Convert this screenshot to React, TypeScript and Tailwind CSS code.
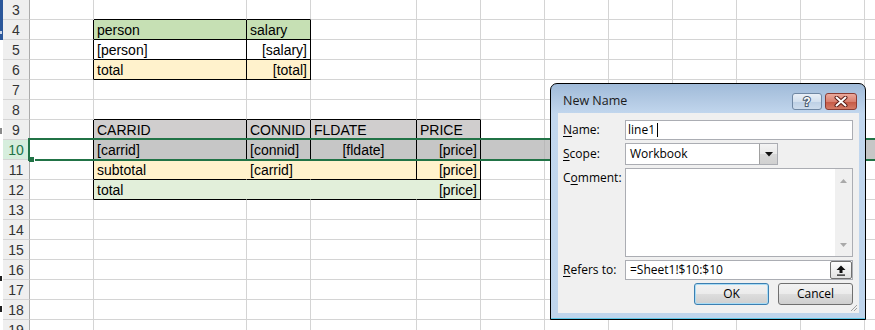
import React from 'react';

const WCLS = ['w-[64px]', 'w-[153px]', 'w-[64px]', 'w-[106px]', 'w-[64px]', 'w-[64px]', 'w-[64px]', 'w-[64px]', 'w-[64px]', 'w-[64px]', 'w-[64px]', 'w-[64px]'];

type Cell = { t: string; a?: 'l' | 'r' | 'c' };
const CONTENT: Record<number, Record<number, Cell>> = {
  4: { 1: { t: 'person' }, 2: { t: 'salary' } },
  5: { 1: { t: '[person]' }, 2: { t: '[salary]', a: 'r' } },
  6: { 1: { t: 'total' }, 2: { t: '[total]', a: 'r' } },
  9: { 1: { t: 'CARRID' }, 2: { t: 'CONNID' }, 3: { t: 'FLDATE' }, 4: { t: 'PRICE' } },
  10: { 1: { t: '[carrid]' }, 2: { t: '[connid]' }, 3: { t: '[fldate]', a: 'c' }, 4: { t: '[price]', a: 'r' } },
  11: { 1: { t: 'subtotal' }, 2: { t: '[carrid]' }, 4: { t: '[price]', a: 'r' } },
  12: { 1: { t: 'total' }, 4: { t: '[price]', a: 'r' } },
};

type Fill = 'green' | 'yellow' | 'gray' | 'sel' | 'lgreen' | null;
function fillOf(r: number, c: number): Fill {
  if (r === 4 && (c === 1 || c === 2)) return 'green';
  if (r === 6 && (c === 1 || c === 2)) return 'yellow';
  if (r === 9 && c >= 1 && c <= 4) return 'gray';
  if (r === 10 && c >= 1) return 'sel';
  if (r === 11 && c >= 1 && c <= 4) return 'yellow';
  if (r === 12 && c >= 1 && c <= 4) return 'lgreen';
  return null;
}
const BG: Record<string, string> = {
  green: 'bg-[#c6e0b4]',
  yellow: 'bg-[#fff2cc]',
  gray: 'bg-[#d0cece]',
  sel: 'bg-[#c6c6c6]',
  lgreen: 'bg-[#e2efda]',
};
const BR_FILL: Record<string, string> = {
  green: 'border-r-[#c6e0b4]',
  yellow: 'border-r-[#fff2cc]',
  gray: 'border-r-[#d0cece]',
  sel: 'border-r-[#b9b9b9]',
  lgreen: 'border-r-[#e2efda]',
};

function blackRight(r: number, c: number) {
  if (r >= 4 && r <= 6) return c <= 2;
  if (r === 9 || r === 10) return c <= 4;
  if (r === 11) return c === 0 || c === 3 || c === 4;
  if (r === 12) return c === 0 || c === 4;
  return false;
}
function blackBottom(r: number, c: number) {
  if (r >= 3 && r <= 6) return c === 1 || c === 2;
  if (r >= 8 && r <= 12) return c >= 1 && c <= 4;
  return false;
}

function cellClass(r: number, c: number) {
  const f = fillOf(r, c);
  const fr = fillOf(r, c + 1);
  let br = 'border-r-[#d4d4d4]';
  if (blackRight(r, c)) br = 'border-r-black';
  else if (f === 'sel') br = 'border-r-[#b9b9b9]';
  else if (f && f === fr) br = BR_FILL[f];
  const bb = blackBottom(r, c) ? 'border-b-black' : 'border-b-[#d4d4d4]';
  const bg = f ? BG[f] : 'bg-white';
  const cell = CONTENT[r]?.[c];
  const al = cell?.a === 'r' ? 'text-right' : cell?.a === 'c' ? 'text-center' : 'text-left';
  return [WCLS[c], 'shrink-0 h-[20px] border-r border-b px-[3px] pt-[1px] leading-[18px] whitespace-nowrap overflow-hidden', br, bb, bg, al].join(' ');
}

const ROWS = Array.from({ length: 17 }, (_, i) => i + 3);

function Sheet() {
  return (
    <div className="flex font-['Liberation_Sans',Arial,sans-serif] text-[14px] text-black">
      {/* sliver of a window behind */}
      <div className="w-[3px] shrink-0 flex flex-col">
        <div className="h-[31px] bg-[#2b579a]" />
        <div className="h-[3px] flex">
          <div className="w-[2px] bg-[#c9d5ea]" />
          <div className="w-[1px] bg-[#2b579a]" />
        </div>
        <div className="h-[6px] bg-[#2b579a]" />
        <div className="h-[88px] bg-white" />
        <div className="h-[6px] w-[2px] bg-[#8a8a8a]" />
        <div className="h-[142px] bg-white" />
        <div className="h-[5px] w-[2px] bg-[#202020]" />
        <div className="h-[25px] bg-white" />
        <div className="h-[6px] w-[2px] bg-[#202020]" />
        <div className="h-[30px] bg-white" />
      </div>
      <div className="flex flex-col">
        {ROWS.map((r) => (
          <div key={r} className="flex h-[20px]">
            <div
              className={
                r === 10
                  ? 'w-[27px] shrink-0 h-[20px] border-r border-b border-r-[#ababab] border-b-[#d4d4d4] bg-[#d6eedd] text-[#217346] text-center text-[14px] pt-[1px] leading-[18px]'
                  : 'w-[27px] shrink-0 h-[20px] border-r border-b border-r-[#ababab] border-b-[#d4d4d4] bg-[#efefef] text-[#333] text-center text-[14px] pt-[1px] leading-[18px]'
              }
            >
              {r}
            </div>
            {WCLS.map((_, c) => (
              <div key={c} className={cellClass(r, c)}>
                {CONTENT[r]?.[c]?.t ?? ''}
              </div>
            ))}
          </div>
        ))}
      </div>
    </div>
  );
}

function Label({ pre, u, post }: { pre?: string; u: string; post: string }) {
  return (
    <span>
      {pre}
      <span className="underline underline-offset-[2px]">{u}</span>
      {post}
    </span>
  );
}

function Dialog() {
  return (
    <div className="absolute left-[550px] top-[83px] w-[316px] h-[237px] rounded-t-[7px] border border-black bg-[linear-gradient(to_bottom,#a0bbd9_0px,#b7cde6_20px,#c2d7ee_30px,#bfd5ec_100%)] shadow-[inset_0_-1px_0_#5cc6e6] flex flex-col font-['Open_Sans',Arial,sans-serif] text-[12px] text-black">
      {/* title bar */}
      <div className="h-[29px] flex items-start pl-[12px] pr-[8px]">
        <span className="pt-[9px] text-[12.5px] leading-[16px] text-[#1b1b1b]">New Name</span>
        <div className="ml-auto pt-[9px] flex gap-[3px]">
          <div className="w-[30px] h-[17px] rounded-[3px] border border-[#6f87a3] bg-[linear-gradient(to_bottom,#e9eff7_0%,#d3e0ee_50%,#bccfe4_51%,#cddcec_100%)] flex items-center justify-center">
            <svg width="12" height="13" viewBox="0 0 12 13">
              <text x="6" y="11" textAnchor="middle" fontFamily="Liberation Sans, Arial, sans-serif" fontWeight="bold" fontSize="12" fill="#ffffff" stroke="#4a5a6e" strokeWidth="2" paintOrder="stroke">?</text>
            </svg>
          </div>
          <div className="w-[32px] h-[17px] rounded-[3px] border border-[#8a3b32] bg-[linear-gradient(to_bottom,#eba99c_0%,#d9806f_50%,#c55743_51%,#d47b66_100%)] flex items-center justify-center">
            <svg width="14" height="11" viewBox="0 0 14 11">
              <path d="M2.5 1.5 L11.5 9.5 M11.5 1.5 L2.5 9.5" stroke="#5b1d17" strokeWidth="4" strokeLinecap="round" />
              <path d="M2.5 1.5 L11.5 9.5 M11.5 1.5 L2.5 9.5" stroke="#ffffff" strokeWidth="2" strokeLinecap="round" />
            </svg>
          </div>
        </div>
      </div>
      {/* content panel */}
      <div className="relative ml-[7px] mr-[6px] h-[200px] bg-[#f0f0f0] flex flex-col pt-[7px] pl-[5px] pr-[5px]">
        {/* Name */}
        <div className="flex items-center h-[20px]">
          <div className="w-[62px] shrink-0"><Label u="N" post="ame:" /></div>
          <div className="w-[228px] h-[20px] border border-[#abadb3] bg-white flex items-center pl-[2px]">
            <span>line1</span>
            <span className="ml-[2px] w-[1px] h-[14px] bg-black" />
          </div>
        </div>
        {/* Scope */}
        <div className="flex items-center h-[22px] mt-[3px]">
          <div className="w-[62px] shrink-0"><Label u="S" post="cope:" /></div>
          <div className="w-[153px] h-[22px] border border-[#abadb3] bg-white flex items-center">
            <span className="pl-[4px]">Workbook</span>
            <div className="ml-auto w-[18px] h-full border-l border-[#a0a0a0] bg-[linear-gradient(to_bottom,#f4f4f4_0%,#e8e8e8_50%,#d8d8d8_51%,#d0d0d0_100%)] flex items-center justify-center">
              <svg width="8" height="5" viewBox="0 0 8 5">
                <path d="M0 0 L8 0 L4 4.5 Z" fill="#111" />
              </svg>
            </div>
          </div>
        </div>
        {/* Comment */}
        <div className="flex items-start h-[89px] mt-[3px]">
          <div className="w-[62px] shrink-0 pt-[1px]"><Label pre="C" u="o" post="mment:" /></div>
          <div className="w-[228px] h-[89px] border border-[#abadb3] bg-white flex">
            <div className="ml-auto w-[17px] h-full bg-[#f0f0f0] flex flex-col justify-between items-center pt-[10px] pb-[9px]">
              <svg width="7" height="4" viewBox="0 0 7 4"><path d="M0 4 L7 4 L3.5 0 Z" fill="#a9a9a9" /></svg>
              <svg width="7" height="4" viewBox="0 0 7 4"><path d="M0 0 L7 0 L3.5 4 Z" fill="#a9a9a9" /></svg>
            </div>
          </div>
        </div>
        {/* Refers to */}
        <div className="flex items-center h-[20px] mt-[3px]">
          <div className="w-[62px] shrink-0"><Label u="R" post="efers to:" /></div>
          <div className="w-[228px] h-[20px] border border-[#abadb3] bg-white flex items-center pl-[4px]">
            <span>=Sheet1!$10:$10</span>
            <div className="ml-auto w-[22px] h-[18px] rounded-[2px] border border-[#707070] bg-[linear-gradient(to_bottom,#fdfdfd_0%,#f0f0f0_50%,#e2e2e2_100%)] flex items-center justify-center">
              <svg width="10" height="11" viewBox="0 0 10 11">
                <path d="M5 0.5 L9.5 5 L6.5 5 L6.5 8 L3.5 8 L3.5 5 L0.5 5 Z" fill="#111" />
                <rect x="1" y="9.5" width="8" height="1.2" fill="#111" />
              </svg>
            </div>
          </div>
        </div>
        {/* Buttons */}
        <div className="flex justify-end gap-[9px] h-[22px] mt-[3px] pr-[1px]">
          <div className="w-[75px] h-[22px] rounded-[3px] border border-[#3c7fb1] shadow-[inset_0_0_0_1px_#a9dcf5] bg-[linear-gradient(to_bottom,#f2f2f2_0%,#ebebeb_50%,#dddddd_51%,#cfcfcf_100%)] flex items-center justify-center">OK</div>
          <div className="w-[75px] h-[22px] rounded-[3px] border border-[#707070] bg-[linear-gradient(to_bottom,#f2f2f2_0%,#ebebeb_50%,#dddddd_51%,#cfcfcf_100%)] flex items-center justify-center">Cancel</div>
        </div>
        {/* resize grip */}
        <svg className="absolute right-[1px] bottom-[1px]" width="8" height="8" viewBox="0 0 8 8">
          <path d="M7 1 L1 7 M7 4 L4 7 M7 7 L7 7" stroke="#a0a0a0" strokeWidth="1" />
        </svg>
      </div>
    </div>
  );
}

export default function App() {
  return (
    <div className="relative w-[875px] h-[330px] overflow-hidden bg-white">
      <Sheet />
      {/* row selection border */}
      <div className="absolute left-[28px] top-[138px] w-[900px] h-[23px] border-2 border-r-0 border-[#217346]" />
      <div className="absolute left-[29px] top-[157px] w-[6px] h-[5px] bg-[#217346] border-r border-white" />
      <Dialog />
    </div>
  );
}
